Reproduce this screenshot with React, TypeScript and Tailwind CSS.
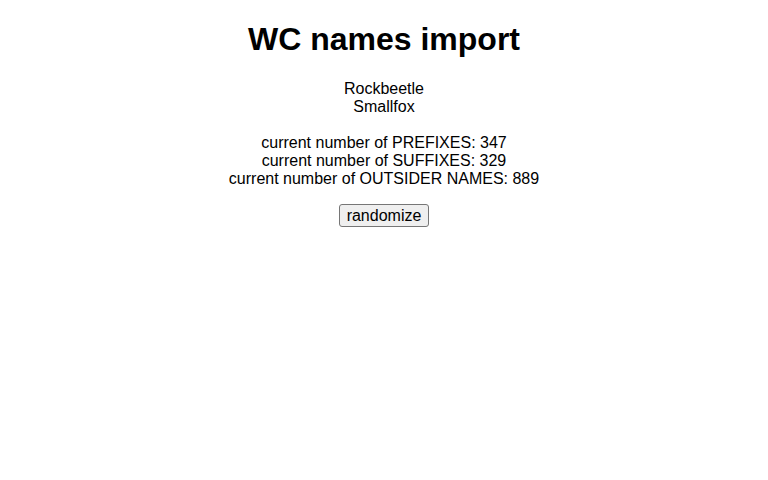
import { useState } from 'react';

const prefixes = ['Rock', 'Small', 'Bramble', 'Frost'];
const suffixes = ['beetle', 'fox', 'pelt', 'whisker'];

const NameImport = () => {
  const [names, setNames] = useState(['Rockbeetle', 'Smallfox']);

  const randomize = () => {
    const pick = (list: string[]) => list[Math.floor(Math.random() * list.length)];
    setNames([pick(prefixes) + pick(suffixes), pick(prefixes) + pick(suffixes)]);
  };

  return (
    <div className="min-h-[480px] bg-white text-black text-center font-['Liberation_Sans',Arial,sans-serif] text-base leading-[18px]">
      <h1 className="pt-[21px] pb-[22px] text-[32px] leading-[37px] font-bold">WC names import</h1>
      <div>
        {names.map((name) => (
          <div key={name}>{name}</div>
        ))}
        <br />
        <div>current number of PREFIXES: 347</div>
        <div>current number of SUFFIXES: 329</div>
        <div>current number of OUTSIDER NAMES: 889</div>
      </div>
      <div className="mt-[16px]">
        <button
          onClick={randomize}
          className="px-[7px] pt-[2px] pb-[1px] bg-[#efefef] border border-[#767676] rounded-[3px] leading-[18px] text-black"
        >
          randomize
        </button>
      </div>
    </div>
  );
};

export default function App() {
  return <NameImport />;
}
